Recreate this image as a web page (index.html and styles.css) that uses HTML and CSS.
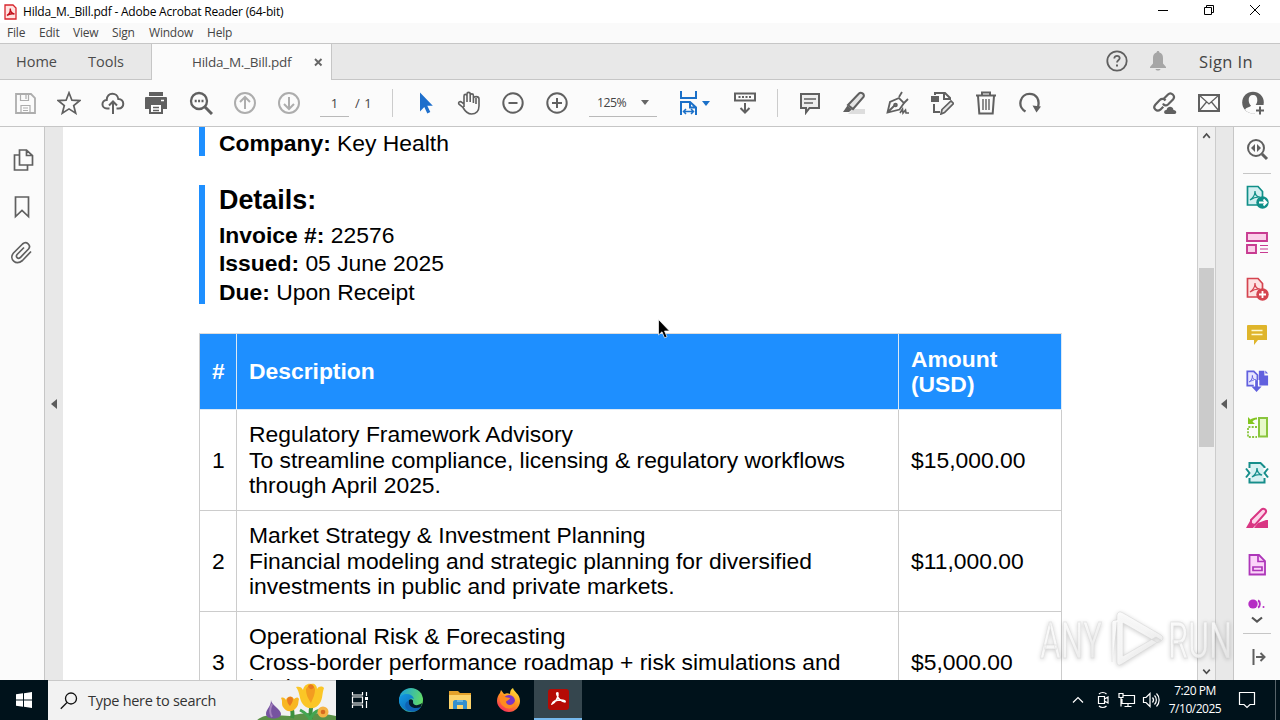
FILE: index.html
```html
<!DOCTYPE html>
<html lang="en">
<head>
<meta charset="utf-8">
<title>Hilda_M._Bill.pdf - Adobe Acrobat Reader (64-bit)</title>
<link rel="stylesheet" href="styles.css">
</head>
<body>
<div class="screen">
  <header class="titlebar">
    <svg class="app-icon" width="13" height="16" viewBox="0 0 13 16"><path d="M1 1h8l3 3v11H1z" fill="#ffe3e1" stroke="#d8242c" stroke-width="1.3"/><path d="M3 11.5c2-1 3.500-4 3.300-7M6.300 5c0 2.500 2 4.500 4.200 5M3 11.500c2-1.500 5-2 7.500-1.500" fill="none" stroke="#c2101b" stroke-width="1.400"/></svg>
    <span class="title">Hilda_M._Bill.pdf - Adobe Acrobat Reader (64-bit)</span>
    <div class="win-buttons">
      <svg width="12" height="12" viewBox="0 0 12 12"><path d="M1 6.500h10" class="wb"/></svg>
      <svg width="12" height="12" viewBox="0 0 12 12"><path d="M1.500 3.500h7v7h-7zM3.500 3.500v-2h7v7h-2" class="wb"/></svg>
      <svg width="12" height="12" viewBox="0 0 12 12"><path d="M1 1l10 10M11 1L1 11" class="wb"/></svg>
    </div>
  </header>
  <nav class="menubar"><span class="m1">File</span><span class="m2">Edit</span><span class="m3">View</span><span class="m4">Sign</span><span class="m5">Window</span><span class="m6">Help</span></nav>
  <div class="tabs">
    <span class="tab home">Home</span><span class="tab tools">Tools</span>
    <div class="tab active"><span class="tabname">Hilda_M._Bill.pdf</span><svg width="9" height="9" viewBox="0 0 9 9"><path d="M1 1l6.500 6.500M7.500 1L1 7.500" stroke="#666" stroke-width="1.900"/></svg></div>
    <div class="account">
      <svg width="22" height="22" viewBox="0 0 22 22" class="ic"><circle cx="11" cy="11" r="9.700" stroke-width="1.800"/><path d="M8.300 8.500c0-3.700 5.600-3.300 5.400-.2-.1 2-2.700 2-2.700 4.300" stroke-width="1.800"/><path d="M11 14.500v2" stroke-width="2"/></svg>
      <svg width="18" height="22" viewBox="0 0 18 22"><path d="M9 1c1 0 1.400.7 1.400 1.500C13 3.200 14 5.300 14 8v5.500l3 3.500v1H1v-1l3-3.500V8c0-2.700 1-4.800 3.600-5.500C7.600 1.700 8 1 9 1zM6.500 19h5c-.5 2-4.500 2-5 0z" fill="#a6a6a6"/></svg>
      <span class="signin">Sign In</span>
    </div>
  </div>
  <div class="toolbar">
    <span class="cell"><svg class="ic pale" width="24" height="24" viewBox="0 0 24 24"><path d="M3 3h15l4 4v15H3z" stroke-width="1.800"/><path d="M7.500 3v6.500h8V3M13 4v4M8 22v-7.500h9V22M10 17h5M10 19.500h5" stroke-width="1.200"/></svg></span>
    <span class="cell"><svg class="ic" width="24" height="24" viewBox="0 0 24 24"><path d="M12 1.800l2.900 7.400 7.800.4-6 4.900 2 7.700L12 17.900l-6.700 4.300 2-7.700-6-4.900 7.800-.4z" stroke-width="1.700"/></svg></span>
    <span class="cell"><svg class="ic" width="24" height="24" viewBox="0 0 24 24"><path d="M8.500 17.500H6c-6 0-6-8.500-.3-8.500C6 .5 16.500 1 17.300 8c6.500-.2 6.700 9.500.2 9.500h-2"/><path d="M12 23V11M8 14.500l4-4 4 4"/></svg></span>
    <span class="cell print"><svg width="24" height="24" viewBox="0 0 24 24"><path fill="#606060" d="M5 1h14v4H5zM2 6h20a1 1 0 0 1 1 1v11h-4v-4H5v4H1V7a1 1 0 0 1 1-1z"/><path d="M6 13v9h12v-9z" fill="#fff" stroke="#606060" stroke-width="2"/><path d="M9 16.500h6M9 19.500h6" stroke="#606060" stroke-width="1.300"/><path d="M17 9.500h3" stroke="#fff" stroke-width="1.500"/></svg></span>
    <span class="cell"><svg class="ic" width="24" height="24" viewBox="0 0 24 24"><circle cx="10" cy="10" r="8" stroke-width="2.300"/><path d="M16 16l7 7" stroke-width="3"/><path d="M5.700 10h9" stroke-width="2.300" stroke-dasharray="2 1.400"/></svg></span>
    <span class="cell"><svg class="ic pale" width="24" height="24" viewBox="0 0 24 24"><circle cx="12" cy="12" r="10"/><path d="M12 18V6.500M7 11l5-5 5 5"/></svg></span>
    <span class="cell"><svg class="ic pale" width="24" height="24" viewBox="0 0 24 24"><circle cx="12" cy="12" r="10"/><path d="M12 6v11.500M7 13l5 5 5-5"/></svg></span>
    <div class="pages"><span class="pagebox">1</span><span class="total">/ 1</span></div>
    <i class="vsep"></i>
    <span class="cell first"><svg width="24" height="24" viewBox="0 0 24 24"><path d="M7 1.500v19l4.300-4.500 3 6.500 3-1.500-3-6.200h5.500z" fill="#1e6fcc"/></svg></span>
    <span class="cell"><svg class="ic" width="24" height="24" viewBox="0 0 24 24"><path d="M7 16V5c0-2.200 3-2.200 3 0v6-8c0-2.200 3.200-2.200 3.200 0v8V4.500c0-2.200 3.200-2.200 3.200 0V12 7.500c0-2.400 5.600-2.800 5.600.5v7c0 5-3 8-7.500 8-4 0-6-2-8.500-6.500l-4-3.300C.7 11.500 3 9.500 5 11.500L7 13M19 7v6" stroke-width="1.600"/></svg></span>
    <span class="cell"><svg class="ic" width="24" height="24" viewBox="0 0 24 24"><circle cx="12" cy="12" r="9.700"/><path d="M7.500 12h9"/></svg></span>
    <span class="cell"><svg class="ic" width="24" height="24" viewBox="0 0 24 24"><circle cx="12" cy="12" r="9.700"/><path d="M7 12h10M12 7v10"/></svg></span>
    <div class="zoom"><span>125%</span><i class="caret"></i></div>
    <span class="fit"><svg width="20" height="26" viewBox="0 0 20 26" fill="none" stroke="#1b70c8" stroke-width="2"><path d="M3 1v7h15V1M3 25V12h9l6 5.500V25M12 12v5.500h6"/><path d="M5.500 21.500h10M8 19l-2.500 2.500L8 24M13 19l2.500 2.500L13 24" stroke-width="1.500"/></svg><i class="caret blue"></i></span>
    <span class="cell"><svg class="ic" width="24" height="24" viewBox="0 0 24 24"><path d="M2 2.500h20v7H2z"/><path d="M5.500 6h13.500" stroke-dasharray="2 1.500"/><path d="M12 12v9.500M7.500 17l4.500 4.500 4.500-4.500"/></svg></span>
    <i class="vsep second"></i>
    <span class="cell first2"><svg class="ic" width="24" height="24" viewBox="0 0 24 24"><path d="M3 3h18v14h-9.500L8 21.500V17H3z" fill="#eee"/><path d="M6 8h12M6 12h9" stroke-width="1.400"/></svg></span>
    <span class="cell"><svg class="ic" width="24" height="24" viewBox="0 0 24 24"><path d="M11 18h12v5H6z" fill="#ddd" stroke="none"/><path d="M6 14L17 2.500c2-2 6 .5 4.500 3.500L11 18zM6 14l5 4" fill="#e4e4e4"/><path d="M5.500 14.500L10 18.500 7 21H1z" fill="#606060" stroke="none"/></svg></span>
    <span class="cell"><svg class="ic" width="24" height="24" viewBox="0 0 24 24"><path d="M1.500 21.500L4 11l9-4 5 5-4.500 6.500zM2 21l7-7" stroke-width="1.800"/><path d="M13 6l3-5M18 12l4-4" stroke-width="1.800"/><circle cx="9.500" cy="14" r="1.300"/><path d="M14 22l2.500-4 .5 4 2.500-3 .5 3h3" stroke-width="1.600"/></svg></span>
    <span class="cell"><svg class="ic" width="24" height="24" viewBox="0 0 24 24"><path d="M5 4V2h10l5 5v2M14 2v6h5M4 13v8h6"/><path d="M1 5h8v6H1z" fill="#606060" stroke="none"/><path d="M12 18.500L21 10l2.500 2.500-9 9L11 23z" fill="#e5e5e5" stroke-width="1.700"/></svg></span>
    <span class="cell"><svg class="ic" width="24" height="24" viewBox="0 0 24 24"><path d="M2 4.500h20M8 4V1.500h8V4M4 5l1.300 17.500h13.400L20 5"/><path d="M9 8v11M12 8v11M15 8v11" stroke-width="1.400"/></svg></span>
    <span class="cell"><svg class="ic" width="24" height="24" viewBox="0 0 24 24"><path d="M7.500 20.500C-1.500 15 2.500 2.800 11.500 2.800c7 0 10.500 6 8.500 13.200" stroke-width="2.300"/><path d="M14.500 14.500l8.500 1-4.500 6z" fill="#606060" stroke="none"/></svg></span>
    <div class="share">
      <span class="cell"><svg class="ic" width="26" height="24" viewBox="0 0 26 24"><path d="M11 8.500l5-5c3-3 8 1.500 5 5l-5 5c-2 1.700-4 1-5-1M13.500 9.500c-1.500-2-4-2.200-5.700-.5l-4.500 4.700c-3 3.500 1.500 7.800 5 5l3-3" stroke-width="2.200"/><path d="M14 23c-3-.2-2-4.500.5-4 1-4.500 6.500-4 7 0C25 19 25 23 22.500 23z" fill="#606060" stroke="none"/></svg></span>
      <span class="cell"><svg class="ic" width="24" height="24" viewBox="0 0 24 24"><path d="M2 4h20v16H2z"/><path d="M2 4l10 9L22 4M2 20l7.500-9M22 20l-7.500-9" stroke-width="1.300"/></svg></span>
      <span class="cell"><svg width="24" height="24" viewBox="0 0 24 24"><circle cx="12" cy="11.500" r="10.800" fill="#606060"/><path d="M12 4c3 0 4.500 2 4.300 5.500-.2 2.500-1 4-2.300 5 1 2 5 1.500 6 4.500-5 5-12 4-16 0 1-3 5-2.500 6-4.500-1.300-1-2.100-2.500-2.300-5C7.500 6 9 4 12 4z" fill="#fbfbfb"/><path d="M14 14h10v10H14z" fill="#fbfbfb"/><path d="M19 15.500v8M15 19.500h8" stroke="#606060" stroke-width="2"/></svg></span>
    </div>
  </div>

  <main class="workspace">
    <aside class="leftrail">
      <svg class="ic" width="24" height="24" viewBox="0 0 24 24"><path d="M8.500 2h7l6 5.500V17h-13zM15.500 2v5.500H21M8 7H3.500v15h13v-5" stroke-width="1.700"/></svg>
      <svg class="ic" width="24" height="24" viewBox="0 0 24 24"><path d="M4.500 2h13v19.500L11 15.500l-6.500 6z" stroke-width="1.700"/></svg>
      <svg class="ic clip" width="24" height="24" viewBox="0 0 24 24"><path d="M21 10.500l-8.500 9C6 25-1.500 18 3.500 12l9-9c4-3.500 9 1.500 6 5l-8.200 8.500c-2.500 2-5-.7-3.200-3L14 6.500" stroke-width="1.700"/></svg>
    </aside>
    <div class="gutter left"><i class="tri"></i></div>
    <article class="document">
      <section class="party"><p><b>Company:</b> Key Health</p></section>
      <section class="details">
        <h2>Details:</h2>
        <p><b>Invoice #:</b> 22576</p>
        <p><b>Issued:</b> 05 June 2025</p>
        <p><b>Due:</b> Upon Receipt</p>
      </section>
      <div class="invoice">
        <div class="row head"><div>#</div><div>Description</div><div>Amount<br>(USD)</div></div>
        <div class="row"><div>1</div><div>Regulatory Framework Advisory<br>To streamline compliance, licensing &amp; regulatory workflows<br>through April 2025.</div><div>$15,000.00</div></div>
        <div class="row"><div>2</div><div>Market Strategy &amp; Investment Planning<br>Financial modeling and strategic planning for diversified<br>investments in public and private markets.</div><div>$11,000.00</div></div>
        <div class="row"><div>3</div><div>Operational Risk &amp; Forecasting<br>Cross-border performance roadmap + risk simulations and<br>business continuity.</div><div>$5,000.00</div></div>
      </div>
    </article>
    <div class="scrollbar">
      <svg width="17" height="17" viewBox="0 0 17 17"><path d="M4.500 11l3.500-4 3.500 4" class="arrow"/></svg>
      <div class="track"><i class="thumb"></i></div>
      <svg width="17" height="17" viewBox="0 0 17 17"><path d="M4.500 6.500l3.500 4 3.500-4" class="arrow"/></svg>
    </div>
    <div class="gutter right"><i class="tri"></i></div>
    <aside class="rightrail">
      <div class="searchtool"><svg class="ic" width="24" height="24" viewBox="0 0 24 24"><circle cx="11" cy="10" r="8"/><path d="M17 16l5 5" stroke-width="3"/><path d="M10 6v8l-4-4zM12 6v8l4-4z" fill="#606060" stroke="none"/></svg></div>
      <div class="tools-list">
        <svg width="24" height="24" viewBox="0 0 24 24" fill="none"><path d="M2.500 1.500H13l4.500 5V20h-15z" fill="#d3eff1" stroke="#108f88" stroke-width="1.700"/><path d="M5 15c3-2 5-5 5-9 0 4 2 6 5 6-4-.2-7 .8-10 3" stroke="#108f88" stroke-width="1.200"/><circle cx="17.500" cy="17.500" r="6.200" fill="#108f88"/><path d="M14 17.500h7M18.500 14.500l3 3-3 3" stroke="#fff" stroke-width="1.800"/></svg>
        <svg width="24" height="24" viewBox="0 0 24 24"><path d="M2 2h20v8H2zM2 14h9v8H2z" fill="#fbd0e9" stroke="#c83b91" stroke-width="1.900"/><path d="M15 14.500h8M15 18h8M15 21.500h8" stroke="#c83b91" stroke-width="1.200"/></svg>
        <svg width="24" height="24" viewBox="0 0 24 24" fill="none"><path d="M2.500 1.500H13l4.500 5V20h-15z" fill="#fde3e2" stroke="#d5444f" stroke-width="1.700"/><path d="M5 15c3-2 5-5 5-9 0 4 2 6 5 6-4-.2-7 .8-10 3" stroke="#d5444f" stroke-width="1.200"/><circle cx="17.500" cy="17.500" r="6.200" fill="#d5444f"/><path d="M14 17.500h7M17.500 14v7" stroke="#fff" stroke-width="1.800"/></svg>
        <svg width="24" height="24" viewBox="0 0 24 24"><path d="M3 2h18a1 1 0 0 1 1 1v14h-9l-4 5v-5H2V3a1 1 0 0 1 1-1z" fill="#dfb52b"/><path d="M6.500 7.500h11M6.500 11.500h11" stroke="#fff9cf" stroke-width="1.700"/></svg>
        <svg width="24" height="26" viewBox="0 0 24 26"><path d="M14 2h6v5h4v11H14z" fill="#6160de"/><path d="M21 1.500l3 3.500h-3z" fill="#6160de"/><path d="M1.500 2.500h7l4 4V18h-11z" fill="#e6e4ff" stroke="#6160de" stroke-width="1.900"/><path d="M3.500 14c3-2 3.500-4 3.500-7 0 3 1 4.500 4 5-3-.2-5 .6-7.500 2" fill="none" stroke="#6160de"/><path d="M11.500 12v9" stroke="#fff" stroke-width="6"/><path d="M11.500 12v10" stroke="#6160de" stroke-width="3"/><path d="M6 19h11l-5.500 6z" fill="#6160de"/></svg>
        <svg width="24" height="24" viewBox="0 0 24 24"><path d="M14 3h8v18.500h-8z" fill="#e7f9ca" stroke="#89c53d" stroke-width="2"/><path d="M12 12H3v10h9" fill="none" stroke="#89c53d" stroke-width="1.800" stroke-dasharray="2 1.300"/><path d="M3 2v7h7L7.500 6.500C9 5 10 4.500 12 4.500V2.500c-3 0-5 1-6.500 2z" fill="#83c520"/></svg>
        <svg width="24" height="24" viewBox="0 0 24 24" fill="none"><path d="M5.500 3h9l4 4v13h-13z" fill="#d7f1f2"/><path d="M4.500 7V2h11l4 4v1M4.500 17v4.500h15V17" stroke="#168e8b" stroke-width="2"/><path d="M1 7.500L4.500 12 1 16.500M23 7.500L19.500 12l3.500 4.500" stroke="#168e8b" stroke-width="2"/><path d="M7 16c3-2 5-5 5-9 0 4 2 6 5 7-4-.8-7 0-10 2" stroke="#168e8b" stroke-width="1.300"/></svg>
        <svg width="24" height="24" viewBox="0 0 24 24"><path d="M13 16l8-3h2v8H9z" fill="#d93683"/><path d="M6 13L16.500 2.500c2-2 6 .5 4 3.500L10 18l-4-1z" fill="#fdd6eb" stroke="#d93683" stroke-width="2"/><path d="M5 14l5 5-2 2H1z" fill="#d93683"/></svg>
        <svg width="24" height="24" viewBox="0 0 24 24"><path d="M4.500 2H14l6 6v13.500H4.500z" fill="#fbd4f9" stroke="#ad36b9" stroke-width="1.800"/><path d="M13 2v6.500h6.500M8 14h9v3.500H8z" fill="none" stroke="#ad36b9" stroke-width="1.700"/></svg>
      </div>
      <svg class="partial" width="24" height="10" viewBox="0 0 24 10"><ellipse cx="8" cy="5" rx="4.700" ry="4.500" fill="#b52cc4"/><path d="M13 1.500c2.500 1 2.500 6 0 7" fill="none" stroke="#b52cc4" stroke-width="1.900"/><circle cx="18.500" cy="8" r="1" fill="#b52cc4"/></svg>
      <svg class="more" width="14" height="8" viewBox="0 0 14 8"><path d="M2 1.500l5 4 5-4" fill="none" stroke="#555" stroke-width="2.200"/></svg>
      <div class="expand"><svg width="16" height="16" viewBox="0 0 16 16"><path d="M3.500 0v16M6 8h8.500M10.500 4l4 4-4 4" fill="none" stroke="#606060" stroke-width="2"/></svg></div>
    </aside>
  </main>

  <footer class="taskbar">
    <div class="start"><svg width="16" height="16" viewBox="0 0 16 16"><path d="M0 2.300l7-1v6.200H0zM8 1.200L16 0v7.500H8zM0 8.500h7v6.200l-7-1zM8 8.500h8V16l-8-1.200z" fill="#fff"/></svg></div>
    <div class="search">
      <svg width="18" height="18" viewBox="0 0 18 18"><circle cx="11" cy="6.500" r="5.500" class="lens"/><path d="M7 10.500L.8 16.700" class="lens"/></svg>
      <span>Type here to search</span>
      <svg class="flowers" width="80" height="40" viewBox="0 0 80 40"><path d="M0 40c10-9 23-5 34-5 16-5 31-3 46 0v5z" fill="#5c9247"/><path d="M36 37c2-7-1-11-3-14M55 38c-2-12 2-16 3-22" stroke="#3c9140" stroke-width="4" fill="none"/><path d="M15 19c0 5 10 9 10 14 0 6-15 6-15 0 0-5 5-7 5-14z" fill="#7653a0"/><path d="M16 23c-3 6-2 10 0 13" stroke="#a381bd" stroke-width="2" fill="none"/><path d="M25 17c2-1 4 0 5 2 1-4 6-5 8-1 2-2 4-2 5 0-1 3 0 6-3 9-4 5-10 4-13-1-2-3 0-6-2-9z" fill="#f8b722"/><path d="M40 6c3-1 6 0 7 3 1-5 5-7 8-6 3-1 6 1 6 5 2-3 5-3 7-1-2 5-1 10-4 15-4 7-14 7-18 0-3-5-2-11-6-16z" fill="#fbc626"/><path d="M50 8c3-5 8-4 9 0 0 6-2 9-4 14-3-5-5-8-5-14z" fill="#f39c20"/><path d="M52 5c2-3 5-2 6 1-1 3-5 3-6-1zM31 18c2-3 5-3 6 0 0 3-2 5-3 7-2-2-3-4-3-7z" fill="#e87a20"/><path d="M44 29c6 3 9 6 10 10 2-7 6-9 10-10" fill="none" stroke="#43a651" stroke-width="3"/><circle cx="67" cy="31" r="5.500" fill="#f4b344"/><circle cx="67" cy="31" r="2.300" fill="#d66a20"/></svg>
    </div>
    <div class="apps">
      <span class="views"><svg width="18" height="16" viewBox="0 0 18 16" fill="none" stroke="#fff" stroke-width="1.200"><path d="M1.500 0v3h10V0M1.500 16v-3h10v3M1.500 5h10v6h-10zM15.500 0v4M15.500 9v7"/><path d="M14 5h3v3h-3z" fill="#fff" stroke="none"/></svg></span>
      <span><svg width="24" height="24" viewBox="0 0 24 24"><defs><linearGradient id="eg" x1="0" y1=".2" x2="1" y2=".5"><stop stop-color="#1aa0dd"/><stop offset="1" stop-color="#63dc64"/></linearGradient><linearGradient id="eb" y2="1"><stop stop-color="#139be4"/><stop offset="1" stop-color="#0959a8"/></linearGradient></defs><circle cx="12" cy="12" r="12" fill="url(#eg)"/><path d="M0 11C2 5 13 4 15 11c-3-2-6 0-5 4 1 5 6 6 12 4-4 6-12 6-17 2-4-3-5-6-5-10z" fill="url(#eb)"/><path d="M10 12c2-2 5 0 4 2 0 4 5 4 9 1 0 2-1 3-2 5-6 3-14-1-11-8z" fill="#031a2b"/><path d="M10 13c-1 5 4 9 12 6-4 5-11 6-15 1-2-3 0-7 3-7z" fill="#0e62b4"/></svg></span>
      <span><svg width="22" height="20" viewBox="0 0 22 20"><path d="M0 1h9l2 2h11v16H0z" fill="#e3a12b"/><path d="M0 5h22v14H0z" fill="#fcd36b"/><path d="M4 19v-7c0-1 1-2 2-2h10c1 0 2 1 2 2v7h-4v-4H8v4z" fill="#3590ce"/><path d="M8 11h6" stroke="#69b5df" stroke-width="2"/></svg></span>
      <span><svg width="24" height="24" viewBox="0 0 24 24"><defs><linearGradient id="ff" x1=".8" x2=".2" y2="1"><stop stop-color="#ffe43b"/><stop offset=".5" stop-color="#ff9020"/><stop offset="1" stop-color="#f72561"/></linearGradient></defs><path d="M3 5l1-3 3 4c3-1 4-1 6 0 0-3 1-5 3-6 1 4 7 6 7 13 0 6-5 11-11 11S0 19 0 13c0-3 1-6 3-8z" fill="url(#ff)"/><circle cx="12" cy="13" r="6" fill="#7b36c6"/><path d="M2 7c3-1 5 0 6 2l5 1c0 2-3 2-4 4 1 4 7 4 9-1 1 7-7 10-12 5C2 15 3 10 2 7z" fill="#ff8b20"/></svg></span>
      <span class="on"><svg width="21" height="21" viewBox="0 0 21 21"><rect width="21" height="21" rx="3" fill="#b50b05"/><path d="M4 15c3-1 7-7 6-11-1-1-2 0-1 2 1 4 5 7 8 7 1-1-1-2-4-2-4 0-8 1-9 4z" fill="none" stroke="#fff" stroke-width="1.400"/></svg></span>
    </div>
    <div class="tray">
      <svg class="tr" width="12" height="8" viewBox="0 0 12 8"><path d="M1 6.500l5-5 5 5"/></svg>
      <svg class="tr" width="14" height="18" viewBox="0 0 14 18"><path d="M2.500 5.500h6v7h-6zM8.500 8l3.500-2v6l-3.500-2M3 3c2-2 5.500-2 7.500 0M3 15c2 2 5.500 2 7.500 0" stroke-width="1.200"/></svg>
      <svg class="tr" width="18" height="16" viewBox="0 0 18 16"><path d="M5 3.500h11.500v8H4V7M10 11.500v3M6.500 14.500h7M1 1.500h4v4H1zM3 5.500v9"/></svg>
      <svg class="tr" width="18" height="16" viewBox="0 0 18 16"><path d="M1.500 5.500h2.500l4-4v13l-4-4H1.500zM10.500 5.500c1.300 1.500 1.300 3.500 0 5M12.500 3.500c2.500 2.500 2.500 6.500 0 9M14.500 1.500c3.500 3.500 3.500 9.500 0 13"/></svg>
      <div class="clock"><span>7:20 PM</span><span>7/10/2025</span></div>
      <svg class="tr" width="18" height="18" viewBox="0 0 18 18"><path d="M1.500 1.500h15v12H12L9 16.500l-3-3H1.500z"/></svg>
      <i class="peek"></i>
    </div>
  </footer>

  <svg class="pointer" width="12" height="20" viewBox="0 0 12 20"><path d="M.5.500v15.500L4 12.800l2.500 6 2.500-1-2.500-5.800h5z" fill="#000" stroke="#fff" stroke-width=".7"/></svg>
  <svg class="watermark" width="200" height="76" viewBox="0 0 200 76">
    <defs><linearGradient id="wm" y2="1"><stop stop-color="#fff"/><stop offset=".5" stop-color="#fafafa"/><stop offset="1" stop-color="#e2e2e2"/></linearGradient></defs>
    <g class="mark">
      <text x="4" y="55" textLength="62" lengthAdjust="spacingAndGlyphs">ANY</text>
      <path d="M76 59V19q0-2 5-2v-5q1-5 6-2l38 22q4 3 0 6l-3 2-35-20v33l33-19 5 3-39 24q-5 3-5-2V19" fill-rule="evenodd"/>
      <text x="132" y="55" textLength="64" lengthAdjust="spacingAndGlyphs">RUN</text>
    </g>
  </svg>
</div>
</body>
</html>
```
FILE: styles.css
```css
* { box-sizing: border-box; }
body { margin: 0; background: #fff; font-family: "Open Sans", "Noto Sans", sans-serif; color: #333; }
p, h2 { margin: 0; }
svg { display: block; flex: none; }
.screen { position: relative; width: 1280px; height: 720px; overflow: hidden; display: flex; flex-direction: column; }
.ic { fill: none; stroke: #606060; stroke-width: 2; }
.pale { stroke: #adadad; }

.titlebar { height: 23px; display: flex; align-items: center; padding-left: 4px; background: #fff; }
.title { margin-left: 6px; font-size: 12px; color: #000; white-space: nowrap; letter-spacing: -.21px; }
.win-buttons { margin-left: auto; display: flex; gap: 34px; padding-right: 19px; padding-bottom: 3px; }
.wb { fill: none; stroke: #000; stroke-width: 1; }
.menubar { height: 20px; background: #fafafa; display: flex; align-items: center; padding-left: 7px; padding-bottom: 1px; font-size: 12px; color: #444; letter-spacing: -.2px; }
.m1 { width: 32px; } .m2 { width: 34px; } .m3 { width: 39px; } .m4 { width: 37px; } .m5 { width: 58px; }

.tabs { height: 37px; background: #e8e8e8; border-top: 1px solid #c6c6c6; border-bottom: 1px solid #c6c6c6; display: flex; font-size: 14.500px; line-height: 35px; color: #4b4b4b; }
.home { width: 88px; padding-left: 16px; }
.tools { width: 63px; }
.active { height: 36px; width: 181px; background: #fbfbfb; border-left: 1px solid #c6c6c6; border-right: 1px solid #c6c6c6; display: flex; align-items: center; padding-left: 40px; font-size: 13.500px; }
.tabname { width: 122px; letter-spacing: -.25px; }
.account { margin-left: auto; display: flex; align-items: center; padding-right: 26px; }
.account svg { margin-bottom: 1px; }
.account svg:first-child { margin-right: 21px; }
.signin { margin-left: 32px; width: 55px; font-size: 16.500px; letter-spacing: .4px; color: #444; white-space: nowrap; }

.toolbar { height: 47px; background: #fbfbfb; border-bottom: 1px solid #c6c6c6; padding-left: 3px; display: flex; align-items: center; }
.cell { width: 44px; height: 46px; display: flex; align-items: center; justify-content: center; flex: none; }
.print { padding-right: 2px; }
.pages { width: 81px; display: flex; padding-left: 9px; font-size: 13px; line-height: 26px; color: #444; }
.pagebox { width: 29px; border-bottom: 1px solid #b9b9b9; text-align: center; margin-right: 6px; }
.total { letter-spacing: .5px; }
.vsep { width: 1px; height: 28px; background: #ccc; }
.first { margin-left: 10px; }
.second { margin-left: 10px; }
.first2 { margin-left: 10px; }
.zoom { width: 68px; margin: 0 10px; height: 28px; border-bottom: 1px solid #b9b9b9; display: flex; align-items: center; padding-left: 8px; gap: 15px; font-size: 12.300px; letter-spacing: -.5px; color: #444; }
.caret { border: 4px solid transparent; border-top: 5px solid #666; border-bottom: 0; }
.caret.blue { border-top-color: #1b70c8; }
.fit { width: 56px; display: flex; align-items: center; gap: 4px; padding-left: 11px; }
.share { margin-left: auto; display: flex; padding-right: 5px; }

.workspace { height: 553px; display: flex; background: #fff; }
.leftrail { width: 45px; background: #fbfbfb; border-right: 1px solid #c6c6c6; padding: 21px 0 0 11px; display: flex; flex-direction: column; gap: 23px; }
.clip { margin-left: -1px; margin-top: -1px; }
.gutter { background: #e8e8e8; display: flex; align-items: center; justify-content: center; }
.left { width: 18px; }
.right { width: 19px; border-left: 1px solid #ccc; border-right: 1px solid #c6c6c6; padding-right: 2px; }
.tri { border: 5px solid transparent; border-right: 6px solid #5c5c5c; border-left: 0; }

.document { width: 1134px; padding-left: 136px; overflow: hidden; font-family: "Liberation Sans", Arial, sans-serif; font-size: 22.870px; color: #000; }
.party { height: 29px; border-left: 6px solid #1e8fff; padding-left: 14px; line-height: 33px; }
.details { height: 119px; margin-top: 29px; border-left: 6px solid #1e8fff; padding-left: 14px; line-height: 28.500px; }
.details h2 { font-size: 26.900px; line-height: 31px; margin-bottom: 4.500px; }
.invoice { margin-top: 29px; width: 863px; border-left: 1px solid #ccc; border-top: 1px solid #ddd; }
.row { height: 101px; display: grid; grid-template-columns: 37px 662px 163px; line-height: 25.400px; }
.row > div { border-right: 1px solid #ccc; border-bottom: 1px solid #ccc; padding: 1.200px 0 0 12px; align-content: center; white-space: nowrap; }
.head { height: 76px; background: #1e8fff; color: #fff; font-weight: bold; }
.head > div { border-color: #dce9f5; }

.scrollbar { width: 18px; background: #f0f0f0; border-left: 1px solid #ccc; display: flex; flex-direction: column; padding-left: 1px; }
.scrollbar svg { width: 16px; }
.arrow { fill: none; stroke: #4d4d4d; stroke-width: 1.700; }
.track { flex: 1; padding-top: 124px; }
.thumb { display: block; width: 15px; height: 179px; background: #cbcbcb; }

.rightrail { width: 46px; background: #fbfbfb; display: flex; flex-direction: column; align-items: center; }
.searchtool { width: 28px; height: 47px; padding: 11px 0 0 2px; border-bottom: 1px solid #c6c6c6; }
.tools-list { display: flex; flex-direction: column; align-items: center; gap: 22px; padding-top: 11px; }
.tools-list svg { height: 24px; }
.partial { margin-top: 22px; }
.more { margin-top: 7px; }
.expand { margin-top: 9px; width: 28px; border-top: 1px solid #c6c6c6; padding: 15px 0 0 7px; }

.taskbar { height: 40px; background: #00121b; display: flex; color: #fff; }
.start { width: 48px; display: flex; align-items: center; justify-content: center; }
.search { width: 288px; background: #f2f2f2; border-top: 1px solid #c9c9c9; display: flex; align-items: center; padding-left: 12px; color: #333; font-size: 14.500px; }
.search span { margin-left: 10px; width: 168px; letter-spacing: -.28px; white-space: nowrap; }
.lens { fill: none; stroke: #111; stroke-width: 1.300; }
.apps { display: flex; padding-left: 1px; }
.apps span { width: 49px; height: 40px; display: flex; align-items: center; justify-content: center; }
.apps .views { padding-right: 3px; }
.apps .on { width: 48px; margin-left: 1px; background: #35464e; border-bottom: 2px solid #76b9ed; }
.tray { margin-left: auto; display: flex; align-items: center; }
.tr { fill: none; stroke: #fff; stroke-width: 1.200; margin-right: 10px; }
.tray .tr:nth-child(1) { margin-right: 12px; }
.tray .tr:nth-child(2) { margin-right: 8px; }
.tray .tr:nth-child(3) { margin-right: 6px; }
.tray .tr:nth-child(4) { margin-right: 8px; }
.clock { width: 54px; margin-right: 16px; display: flex; flex-direction: column; align-items: center; font-size: 12px; line-height: 18px; letter-spacing: -.48px; white-space: nowrap; }
.peek { margin-left: 9px; width: 5px; height: 40px; border-left: 1px solid #57636a; }
.pointer { position: absolute; left: 658px; top: 319px; }
.watermark { position: absolute; left: 1036px; top: 603px; overflow: visible; }
.mark { font: 50px Roboto, sans-serif; fill: url(#wm); fill-opacity: .85; stroke: #d4d4d4; stroke-opacity: .5; stroke-width: 1; filter: drop-shadow(0 1px 2px rgba(0,0,0,.22)); }
```
